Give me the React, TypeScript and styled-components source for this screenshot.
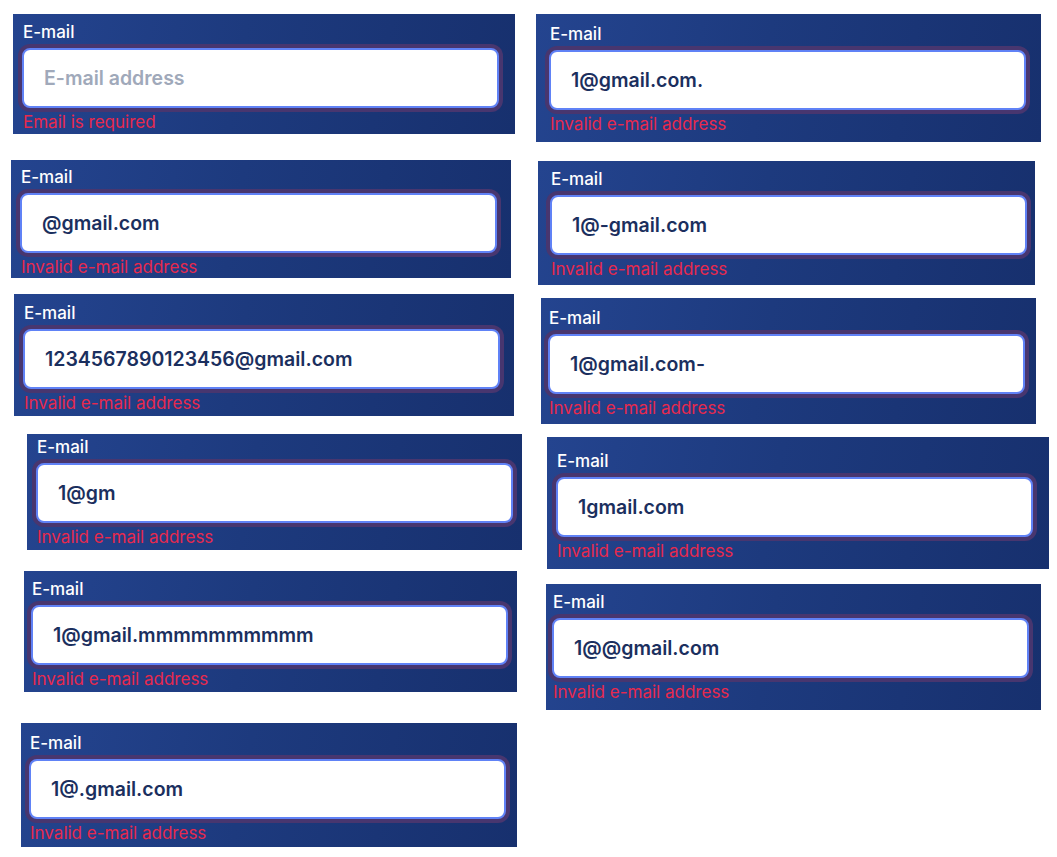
import { createGlobalStyle, styled } from 'styled-components';

const GlobalStyle = createGlobalStyle`
  body {
    margin: 0;
    background: #ffffff;
    font-family: Inter, "Noto Sans", sans-serif;
  }
`;

const Canvas = styled.div`
  display: flex;
  align-items: flex-start;
  width: 1057px;
  height: 857px;
  overflow: hidden;
`;

const Column = styled.div<{ $width: number }>`
  display: flex;
  flex-direction: column;
  width: ${(p) => p.$width}px;
  flex-shrink: 0;
`;

const Card = styled.div<{ $left: number; $top: number; $width: number; $padTop: number; $padBottom: number; $padLeft: number }>`
  display: flex;
  flex-direction: column;
  box-sizing: border-box;
  margin-left: ${(p) => p.$left}px;
  margin-top: ${(p) => p.$top}px;
  width: ${(p) => p.$width}px;
  padding: ${(p) => p.$padTop}px 0 ${(p) => p.$padBottom}px ${(p) => p.$padLeft}px;
  background: linear-gradient(100deg, #24448f 0%, #1d3a7e 45%, #17306e 100%);
`;

const Label = styled.label`
  color: #ffffff;
  font-size: 17px;
  font-weight: 500;
  line-height: 20px;
  height: 20px;
`;

const Field = styled.input`
  box-sizing: border-box;
  width: 477px;
  height: 60px;
  margin: 6px 0 0 -1px;
  padding: 0 20px;
  border: 2px solid #6082f6;
  border-radius: 8px;
  background: #ffffff;
  box-shadow: 0 0 0 4px #48366f;
  outline: none;
  color: #1b2f5e;
  font-family: Inter, "Noto Sans", sans-serif;
  font-size: 19.5px;
  font-weight: 600;

  &::placeholder {
    color: #a0a9ba;
  }
`;

const ErrorText = styled.span`
  margin-top: 4px;
  color: #e8294d;
  font-size: 17px;
  font-weight: 400;
  line-height: 20px;
  height: 20px;
`;

type Entry = {
  value: string;
  error: string;
  left: number;
  top: number;
  width: number;
  padTop: number;
  padBottom: number;
  padLeft: number;
};

const INVALID = 'Invalid e-mail address';

const leftCards: Entry[] = [
  { value: '', error: 'Email is required', left: 13, top: 14, width: 502, padTop: 8, padBottom: 2, padLeft: 10 },
  { value: '@gmail.com', error: INVALID, left: 11, top: 26, width: 500, padTop: 7, padBottom: 1, padLeft: 10 },
  { value: '1234567890123456@gmail.com', error: INVALID, left: 14, top: 16, width: 500, padTop: 9, padBottom: 3, padLeft: 10 },
  { value: '1@gm', error: INVALID, left: 27, top: 18, width: 495, padTop: 3, padBottom: 3, padLeft: 10 },
  { value: '1@gmail.mmmmmmmmmm', error: INVALID, left: 24, top: 21, width: 493, padTop: 8, padBottom: 3, padLeft: 8 },
  { value: '1@.gmail.com', error: INVALID, left: 21, top: 31, width: 496, padTop: 10, padBottom: 4, padLeft: 9 },
];

const rightCards: Entry[] = [
  { value: '1@gmail.com.', error: INVALID, left: 6, top: 14, width: 505, padTop: 10, padBottom: 8, padLeft: 14 },
  { value: '1@-gmail.com', error: INVALID, left: 8, top: 19, width: 497, padTop: 8, padBottom: 6, padLeft: 13 },
  { value: '1@gmail.com-', error: INVALID, left: 11, top: 13, width: 495, padTop: 10, padBottom: 6, padLeft: 8 },
  { value: '1gmail.com', error: INVALID, left: 17, top: 13, width: 502, padTop: 14, padBottom: 8, padLeft: 10 },
  { value: '1@@gmail.com', error: INVALID, left: 16, top: 15, width: 495, padTop: 8, padBottom: 8, padLeft: 7 },
];

const EmailCard = ({ entry }: { entry: Entry }) => (
  <Card
    $left={entry.left}
    $top={entry.top}
    $width={entry.width}
    $padTop={entry.padTop}
    $padBottom={entry.padBottom}
    $padLeft={entry.padLeft}
  >
    <Label>E-mail</Label>
    <Field type="text" readOnly value={entry.value} placeholder="E-mail address" />
    <ErrorText>{entry.error}</ErrorText>
  </Card>
);

export default function App() {
  return (
    <>
      <GlobalStyle />
      <Canvas>
        <Column $width={530}>
          {leftCards.map((c, i) => (
            <EmailCard key={i} entry={c} />
          ))}
        </Column>
        <Column $width={527}>
          {rightCards.map((c, i) => (
            <EmailCard key={i} entry={c} />
          ))}
        </Column>
      </Canvas>
    </>
  );
}
